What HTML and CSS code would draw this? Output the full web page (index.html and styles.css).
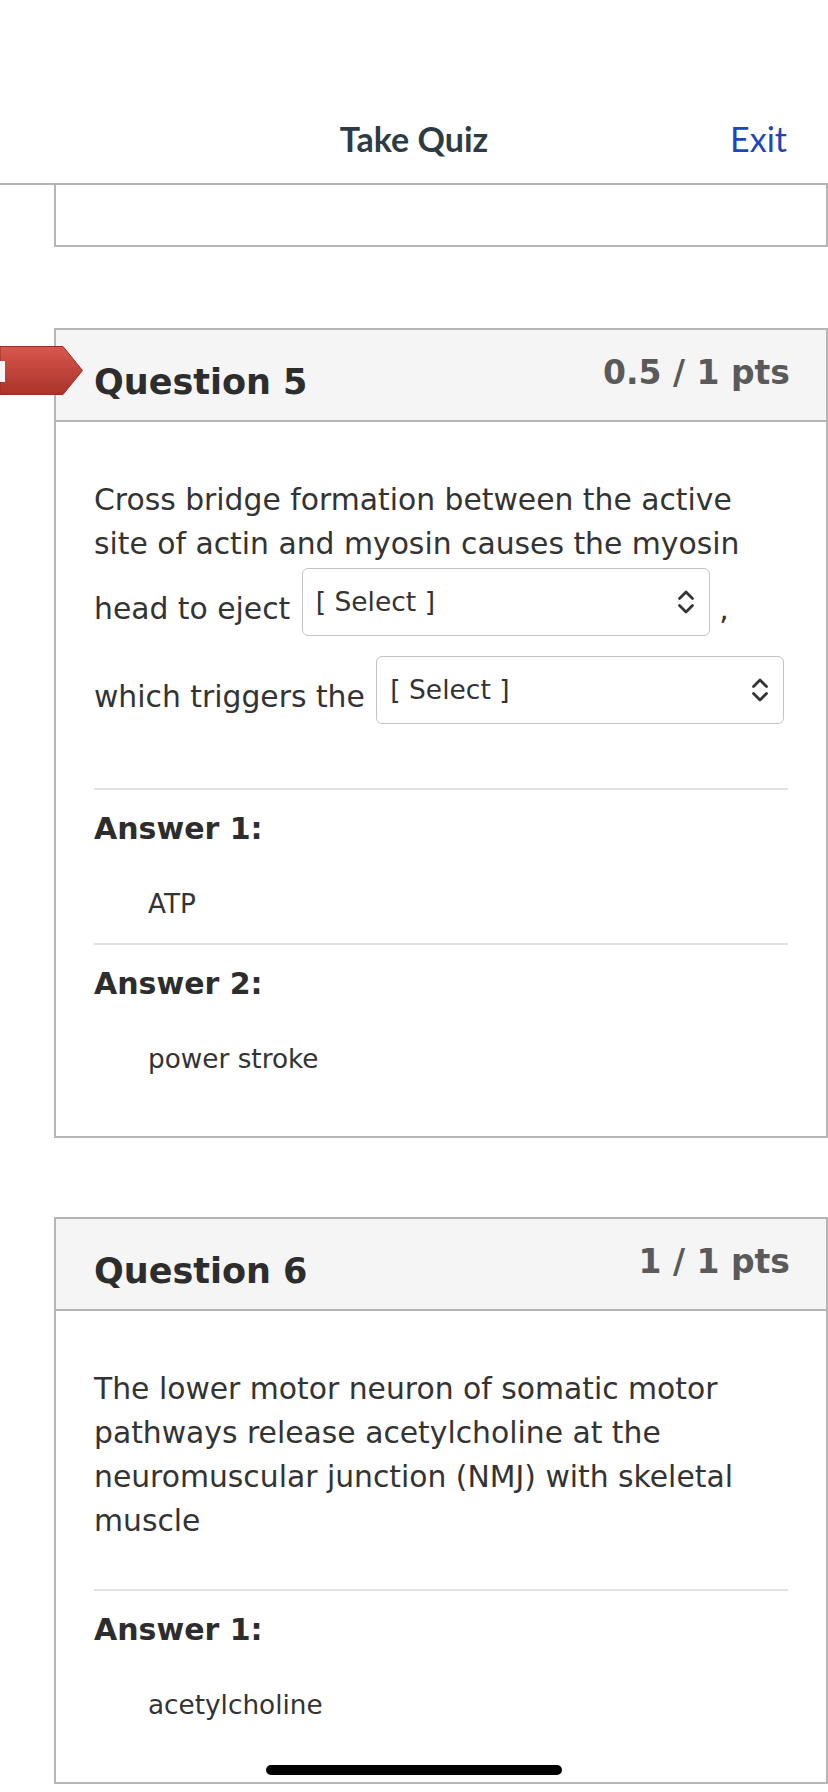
FILE: index.html
```html
<!DOCTYPE html>
<html lang="en">
<head>
<meta charset="utf-8">
<title>Take Quiz</title>
<link rel="stylesheet" href="styles.css">
</head>
<body>
<header class="topbar">
  <div class="topbar-row">
    <span class="topbar-spacer"></span>
    <h1 class="topbar-title">Take Quiz</h1>
    <a class="topbar-exit" href="#">Exit</a>
  </div>
</header>
<main class="quiz">
  <section class="card card-stub"></section>

  <section class="card question">
    <div class="flag">
      <svg class="flag-shape" width="83" height="49" viewBox="0 0 83 49">
        <defs>
          <linearGradient id="flagGrad" x1="0" y1="0" x2="0" y2="1">
            <stop offset="0" stop-color="#d9564d"/>
            <stop offset="1" stop-color="#a9332a"/>
          </linearGradient>
        </defs>
        <polygon points="0,0.5 63,0.5 82.5,24.5 63,48.5 0,48.5" fill="url(#flagGrad)" stroke="#9a2e26" stroke-width="1"/>
        <rect x="0" y="15" width="5" height="21" fill="#f6f6f6"/>
      </svg>
    </div>
    <div class="q-header">
      <h2 class="q-title">Question 5</h2>
      <div class="q-pts">0.5 / 1 pts</div>
    </div>
    <div class="q-body">
      <p class="q-text">Cross bridge formation between the active site of actin and myosin causes the myosin head to eject <span class="select"><span class="select-label">[ Select ]</span><svg class="chev" width="18" height="24" viewBox="0 0 18 24"><path d="M2.5 8.5 L9 2 L15.5 8.5 M2.5 15.5 L9 22 L15.5 15.5" fill="none" stroke="#333" stroke-width="2.8" stroke-linecap="round" stroke-linejoin="round"/></svg></span> , which triggers the <span class="select"><span class="select-label">[ Select ]</span><svg class="chev" width="18" height="24" viewBox="0 0 18 24"><path d="M2.5 8.5 L9 2 L15.5 8.5 M2.5 15.5 L9 22 L15.5 15.5" fill="none" stroke="#333" stroke-width="2.8" stroke-linecap="round" stroke-linejoin="round"/></svg></span></p>
      <div class="answer">
        <div class="answer-label">Answer 1:</div>
        <div class="answer-value">ATP</div>
      </div>
      <div class="answer">
        <div class="answer-label">Answer 2:</div>
        <div class="answer-value">power stroke</div>
      </div>
    </div>
  </section>

  <section class="card question">
    <div class="q-header">
      <h2 class="q-title">Question 6</h2>
      <div class="q-pts">1 / 1 pts</div>
    </div>
    <div class="q-body">
      <p class="q-text">The lower motor neuron of somatic motor pathways release acetylcholine at the neuromuscular junction (NMJ) with skeletal muscle</p>
      <div class="answer">
        <div class="answer-label">Answer 1:</div>
        <div class="answer-value">acetylcholine</div>
      </div>
    </div>
  </section>
</main>
<div class="home-indicator"></div>
</body>
</html>
```
FILE: styles.css
```css
html, body {
  margin: 0;
  padding: 0;
  background: #ffffff;
}

body {
  width: 828px;
  font-family: "DejaVu Sans", Verdana, sans-serif;
  color: #333333;
}

/* Top bar */
.topbar {
  padding: 108px 0 13px;
  border-bottom: 2px solid #b3b3b3;
}

.topbar-row {
  display: grid;
  grid-template-columns: 1fr auto 1fr;
  align-items: center;
  height: 62px;
}

.topbar-title {
  margin: 0;
  font-family: Lato, sans-serif;
  font-weight: 700;
  font-size: 34px;
  line-height: 1;
  color: #2d3b45;
}

.topbar-exit {
  justify-self: end;
  margin-right: 41px;
  font-family: Lato, sans-serif;
  font-weight: 400;
  font-size: 34px;
  line-height: 1;
  color: #1d47b8;
  text-decoration: none;
}

/* Cards */
.card {
  position: relative;
  margin: 0 0 0 54px;
  border: 2px solid #b5b5b5;
  background: #ffffff;
}

.card-stub {
  border-top: 0;
  height: 60px;
}

.question {
  margin-top: 81px;
}

.question + .question {
  margin-top: 79px;
}

.flag {
  position: absolute;
  left: -56px;
  top: 16px;
  width: 83px;
  height: 49px;
}

.flag-shape {
  display: block;
}

.q-header {
  display: flex;
  justify-content: space-between;
  align-items: flex-start;
  height: 90px;
  padding: 0 36px 0 38px;
  background: #f5f5f5;
  border-bottom: 2px solid #b5b5b5;
}

.q-title {
  margin: 32px 0 0;
  font-size: 35px;
  line-height: 41px;
  font-weight: 700;
  color: #2d2d2d;
}

.q-pts {
  margin-top: 24px;
  font-size: 33px;
  line-height: 38px;
  font-weight: 700;
  color: #5a5a5a;
}

.q-body {
  padding: 56px 38px 57px;
}

.q-text {
  margin: 0 0 46px;
  font-size: 29.8px;
  line-height: 44px;
  color: #333333;
}

.select {
  display: inline-flex;
  align-items: center;
  justify-content: space-between;
  box-sizing: border-box;
  width: 408px;
  height: 68px;
  margin: 2px 0 18px 2px;
  padding: 0 14px 0 13px;
  border: 1.5px solid #c4c4c4;
  border-radius: 6px;
  vertical-align: middle;
  background: #ffffff;
}

.select-label {
  font-size: 26.5px;
  line-height: 1;
  color: #333333;
}

.chev {
  display: block;
}

.answer {
  border-top: 2px solid #e2e2e2;
  padding-top: 17px;
}

.answer + .answer {
  margin-top: 19px;
}

.answer-label {
  font-size: 30px;
  line-height: 44px;
  font-weight: 700;
  color: #2d2d2d;
}

.answer-value {
  margin-top: 33px;
  padding-left: 54px;
  font-size: 26.3px;
  line-height: 40px;
  color: #333333;
}

.home-indicator {
  position: fixed;
  left: 266px;
  bottom: 17px;
  width: 296px;
  height: 10px;
  border-radius: 5px;
  background: #000000;
}
```
